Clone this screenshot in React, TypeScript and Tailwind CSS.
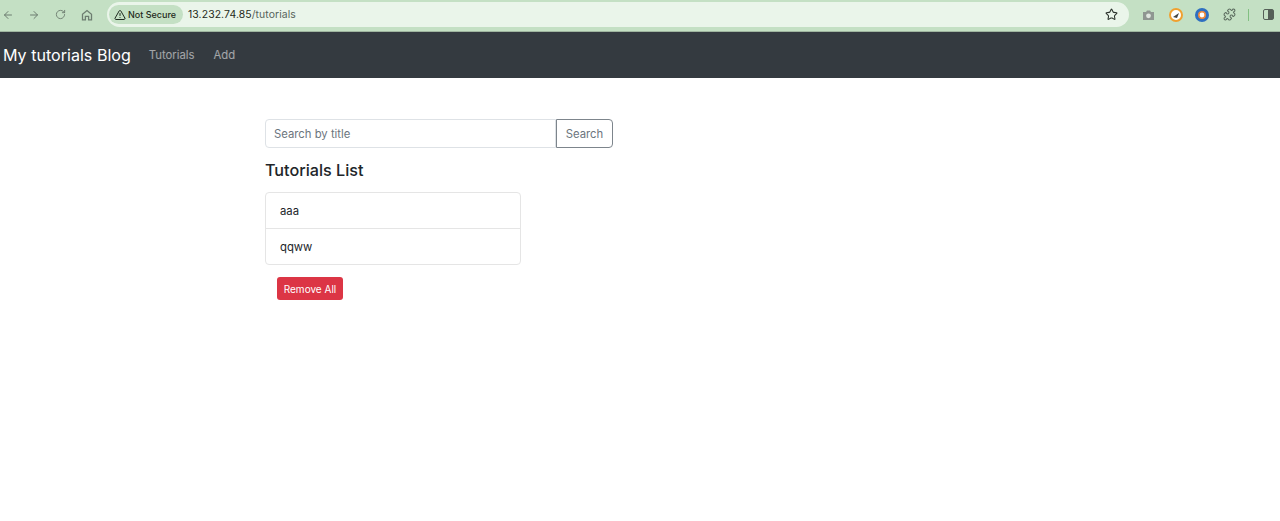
import { ArrowLeft, ArrowRight, RotateCw, Star, TriangleAlert, Puzzle } from "lucide-react"

const font = { fontFamily: "Inter, sans-serif" }

const BrowserBar = () => (
  <div className="h-[32px] bg-[#c4e0c4] border-b border-[#9fb5a0] flex items-center pb-[2px]">
    <div className="flex items-center text-[#6d7d70]">
      <div className="w-[14px] flex justify-center ml-[1px]"><ArrowLeft size={12} /></div>
      <div className="w-[14px] flex justify-center ml-[12px]"><ArrowRight size={12} /></div>
      <div className="w-[14px] flex justify-center ml-[12px]"><RotateCw size={11} /></div>
      <div className="w-[14px] flex justify-center ml-[13px]">
        <svg width="12" height="12" viewBox="0 0 12 12" fill="none" stroke="currentColor" strokeWidth="1.3">
          <path d="M1.5 5.2 6 1.5l4.5 3.7v5.6H7.6V7.4H4.4v3.4H1.5z" />
        </svg>
      </div>
    </div>
    <div className="ml-[13px] w-[1022px] h-[25px] rounded-full bg-[#eaf5ea] flex items-center pl-[2px] pr-[11px]">
      <div className="h-[19px] w-[74px] rounded-full bg-[#c4e0c4] flex items-center pl-[5px] gap-[2px] text-[#1f2a20]">
        <TriangleAlert size={12} />
        <span className="text-[9px] font-medium whitespace-nowrap">Not Secure</span>
      </div>
      <span className="ml-[5px] text-[10.4px] text-[#1f2a20] tracking-[0.1px]">13.232.74.85<span className="text-[#56635a]">/tutorials</span></span>
      <Star size={13} className="ml-auto text-[#2c332d]" />
    </div>
    <div className="flex items-center ml-[13px]">
      <svg width="13" height="12" viewBox="0 0 13 12">
        <path d="M1 3h3l1-1.5h3L9 3h3v8H1z" fill="#8f9691" />
        <circle cx="6.5" cy="6.8" r="2.4" fill="#dfe6df" />
      </svg>
      <svg width="14" height="14" viewBox="0 0 14 14" className="ml-[14px]">
        <circle cx="7" cy="7" r="6" fill="#fff" stroke="#f0a030" strokeWidth="2" />
        <path d="M4 9l6-4-2 5z" fill="#444" />
      </svg>
      <svg width="14" height="14" viewBox="0 0 14 14" className="ml-[12px]">
        <circle cx="7" cy="7" r="7" fill="#2f6fc0" />
        <circle cx="7" cy="7" r="3.2" fill="#fff" stroke="#ef8a3c" strokeWidth="1.6" />
      </svg>
      <Puzzle size={13} className="ml-[14px] text-[#5f6f62]" />
      <div className="ml-[12px] w-[1px] h-[12px] bg-[#82c082]" />
      <div className="ml-[14px] w-[11px] h-[11px] rounded-[2px] border border-[#555f57] flex justify-end">
        <div className="w-[5px] bg-[#555f57]" />
      </div>
    </div>
  </div>
)

const NavBar = () => (
  <nav className="h-[46px] bg-[#343a40] flex items-center pl-[3px]">
    <span className="text-white text-[16.1px] leading-none">My tutorials Blog</span>
    <a className="ml-[18px] pt-[1px] text-[11.3px] text-white/55">Tutorials</a>
    <a className="ml-[19px] pt-[1px] text-[11.3px] text-white/55">Add</a>
  </nav>
)

export default function App() {
  return (
    <div className="min-h-[521px] bg-white text-[#212529]" style={font}>
      <BrowserBar />
      <NavBar />
      <main className="pl-[265px] pt-[41px]">
        <div className="flex w-[348px] h-[29px]">
          <div className="flex-1 border border-[#dee2e6] rounded-l-[4px] flex items-center pl-[8px] pt-[1px] text-[11.3px] text-[#6c757d]">Search by title</div>
          <button className="w-[57px] border border-[#7d858c] rounded-r-[4px] pt-[1px] text-[11.3px] text-[#6c757d]">Search</button>
        </div>
        <h4 className="mt-[11px] text-[16.2px] leading-[22px] font-medium">Tutorials List</h4>
        <ul className="mt-[11px] w-[256px] border border-[#e5e5e5] rounded-[4px] text-[11.3px]">
          <li className="h-[36px] flex items-center pl-[14px] pt-[1px] border-b border-[#e5e5e5]">aaa</li>
          <li className="h-[35px] flex items-center pl-[14px] pt-[1px]">qqww</li>
        </ul>
        <button className="mt-[12px] ml-[12px] w-[66px] h-[23px] bg-[#dc3545] text-white rounded-[3px] pt-[1px] text-[10px]">Remove All</button>
      </main>
    </div>
  )
}
